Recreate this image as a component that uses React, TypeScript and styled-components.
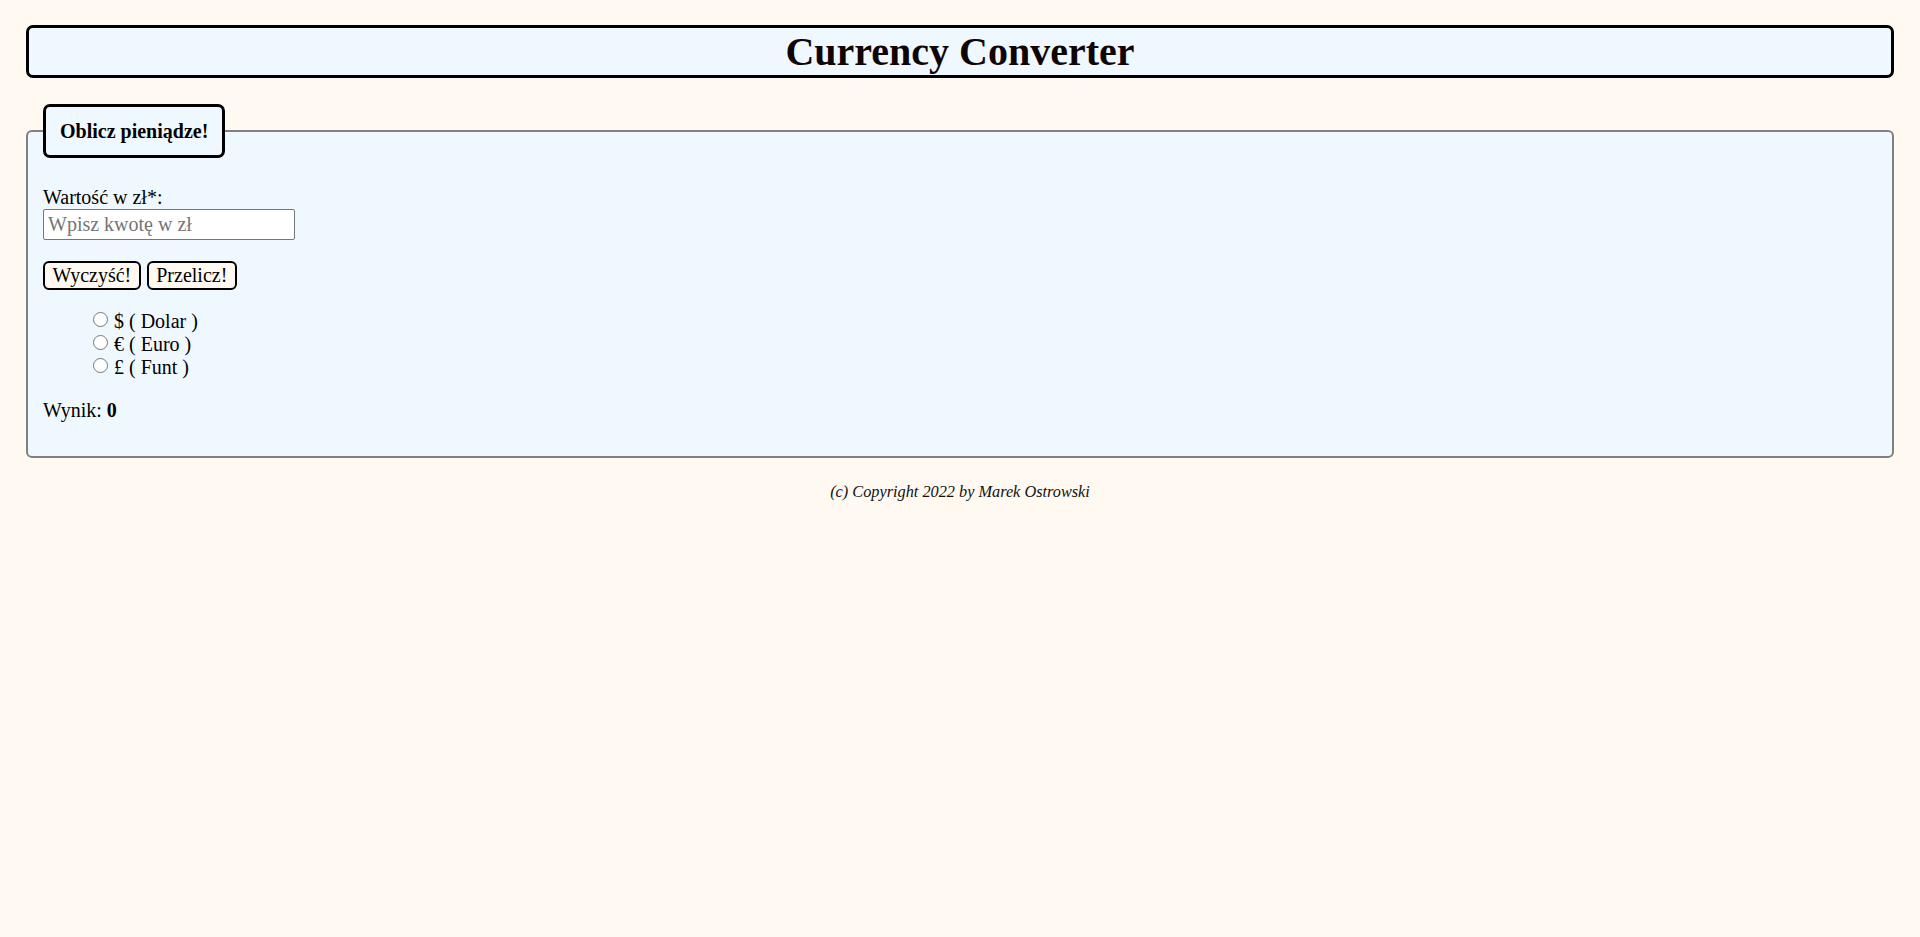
import React, { useState } from "react";
import styled, { createGlobalStyle } from "styled-components";

const Global = createGlobalStyle`
  html, body { margin: 0; padding: 0; background: #FFF9F2; }
  body { font-family: "Liberation Serif", "Times New Roman", serif; color: #000; font-size: 20px; }
`;

const Page = styled.div`
  padding: 25px 26px;
`;

const Header = styled.header`
  background: #F0F8FF;
  border: 3px solid #000;
  border-radius: 7px;
  height: 47px;
  display: flex;
  align-items: center;
  justify-content: center;
`;

const Title = styled.h1`
  margin: 0;
  font-size: 40px;
  font-weight: bold;
  line-height: 47px;
  color: #100505;
`;

const Fieldset = styled.fieldset`
  margin: 26px 0 0;
  padding: 0 15px 13px;
  border: 2px solid #808080;
  border-radius: 6px;
  background: #F0F8FF;
`;

const Legend = styled.legend`
  border: 3px solid #000;
  border-radius: 7px;
  padding: 13px 14px 12px;
  font-weight: bold;
  font-size: 20px;
  line-height: 23px;
  background: #F0F8FF;
`;

const Label = styled.label`
  display: block;
  margin-top: 28px;
  line-height: 23px;
`;

const Input = styled.input`
  display: block;
  box-sizing: border-box;
  width: 252px;
  height: 31px;
  border: 1px solid #767676;
  border-radius: 2px;
  padding: 1px 4px;
  font-family: inherit;
  font-size: 20px;
  background: #fff;
  &::placeholder { color: #757575; }
`;

const Buttons = styled.div`
  display: flex;
  gap: 6px;
  margin-top: 21px;
`;

const Button = styled.button`
  box-sizing: border-box;
  height: 29px;
  padding: 0 7.5px;
  border: 2px solid #000;
  border-radius: 6px;
  background: #FFF9F2;
  font-family: inherit;
  font-size: 20px;
  line-height: 23px;
  color: #000;
  cursor: pointer;
`;

const List = styled.ul`
  list-style: none;
  margin: 20px 0 0;
  padding: 0 0 0 50px;
`;

const Item = styled.li`
  display: flex;
  align-items: center;
  height: 23px;
  line-height: 23px;
`;

const Radio = styled.input`
  width: 15px;
  height: 15px;
  margin: -4px 6px 0 0;
`;

const Result = styled.p`
  margin: 20px 0 21px;
  line-height: 23px;
`;

const Footer = styled.footer`
  margin-top: 25px;
  text-align: center;
  font-style: italic;
  font-size: 16.3px;
  line-height: 18px;
  color: #111;
`;

export default function App() {
  const [val, setVal] = useState("");
  const [cur, setCur] = useState("");
  return (
    <>
      <Global />
      <Page>
        <Header>
          <Title>Currency Converter</Title>
        </Header>
        <Fieldset>
          <Legend>Oblicz pieniądze!</Legend>
          <Label htmlFor="kwota">Wartość w zł*:</Label>
          <Input
            id="kwota"
            placeholder="Wpisz kwotę w zł"
            value={val}
            onChange={(e) => setVal(e.target.value)}
          />
          <Buttons>
            <Button type="button" onClick={() => setVal("")}>Wyczyść!</Button>
            <Button type="button">Przelicz!</Button>
          </Buttons>
          <List>
            {[
              ["usd", "$ ( Dolar )"],
              ["eur", "€ ( Euro )"],
              ["gbp", "£ ( Funt )"],
            ].map(([k, t]) => (
              <Item key={k}>
                <Radio
                  type="radio"
                  name="waluta"
                  checked={cur === k}
                  onChange={() => setCur(k)}
                />
                {t}
              </Item>
            ))}
          </List>
          <Result>
            Wynik: <b>0</b>
          </Result>
        </Fieldset>
        <Footer>(c) Copyright 2022 by Marek Ostrowski</Footer>
      </Page>
    </>
  );
}
